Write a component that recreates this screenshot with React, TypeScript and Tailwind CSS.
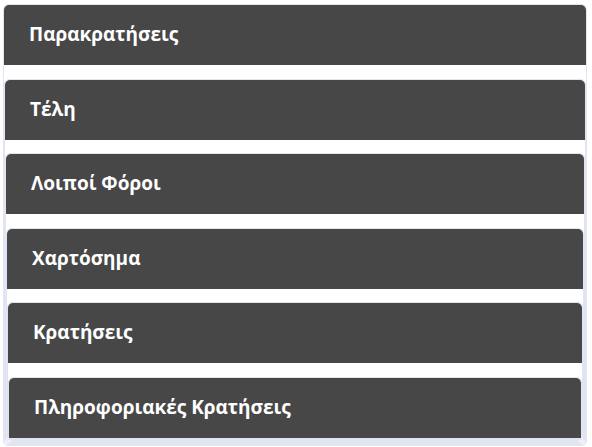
import React from "react";

const items = [
  "Παρακρατήσεις",
  "Τέλη",
  "Λοιποί Φόροι",
  "Χαρτόσημα",
  "Κρατήσεις",
  "Πληροφοριακές Κρατήσεις",
];

function Card({ index }: { index: number }) {
  const last = index === items.length - 1;
  return (
    <div
      className={
        "border border-[#e1e4f1] rounded-[5px] bg-white " +
        (index === 0 ? "" : "mt-[13.5px]")
      }
    >
      <div className="h-[60px] bg-[#474747] rounded-t-[5px] flex items-center pl-[25px] pb-[1px]">
        <span className="text-white text-[19px] font-bold font-['Open_Sans',sans-serif] leading-none">
          {items[index]}
        </span>
      </div>
      {last ? (
        <div className="h-[2px] bg-[#e1e4f1]" />
      ) : (
        <Card index={index + 1} />
      )}
    </div>
  );
}

export default function App() {
  return (
    <div className="w-[592px] h-[447px] bg-white overflow-hidden pt-[4px] pl-[3px]">
      <div className="w-[584px]">
        <Card index={0} />
      </div>
    </div>
  );
}
